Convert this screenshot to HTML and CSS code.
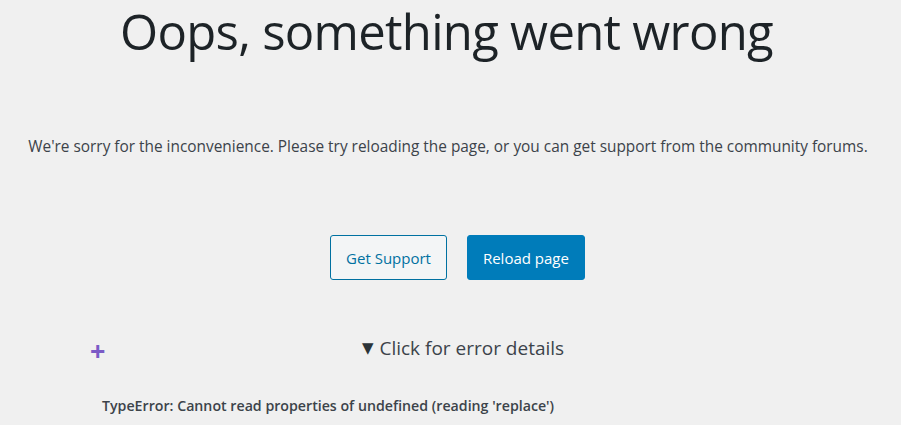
FILE: index.html
```html
<!DOCTYPE html>
<html lang="en">
<head>
    <meta charset="UTF-8" />
    <meta name="viewport" content="width=device-width, initial-scale=1.0"/>
    <title>Error</title>
    <link rel="stylesheet" href="styles.css">
</head>
<body>
    <div class="error-page">
        <h1 class="title">Oops, something went wrong</h1>
        <p class="message">We're sorry for the inconvenience. Please try reloading the page, or you can get support from the community forums.</p>

        <div class="actions">
            <button class="btn btn-secondary">Get Support</button>
            <button class="btn btn-primary">Reload page</button>
        </div>

        <details class="details" open>
            <span class="plus">+</span>
            <summary>Click for error details</summary>
            <div class="error-text">TypeError: Cannot read properties of undefined (reading 'replace')</div>
        </details>
    </div>
</body>
</html>
```

FILE: styles.css
```css
body {
    margin: 0;
    background-color: #f0f0f0;
    color: #3c434a;
    font-family: "Open Sans", "Noto Sans", sans-serif;
    overflow: hidden;
}

.error-page {
    text-align: center;
}

.title {
    margin: 0;
    padding-right: 8px;
    font-size: 49px;
    font-weight: 400;
    letter-spacing: -0.7px;
    line-height: 62px;
    color: #1d2327;
}

.message {
    margin: 74px 0 0;
    padding-right: 5px;
    font-size: 15.4px;
    line-height: 22px;
}

.actions {
    display: flex;
    justify-content: center;
    gap: 20px;
    margin-top: 77px;
    padding-left: 14px;
}

.btn {
    height: 45px;
    padding: 0 15px;
    border-radius: 3px;
    font-family: inherit;
    font-size: 15px;
    cursor: pointer;
}

.btn-secondary {
    background-color: #f3f5f6;
    border: 1px solid #0071a1;
    color: #0071a1;
}

.btn-primary {
    background-color: #007cba;
    border: 1px solid #007cba;
    color: #fff;
}

.details {
    position: relative;
    margin: 55px 77px 0 102px;
    font-size: 19px;
}

.details summary {
    list-style: none;
    cursor: pointer;
}

.details summary::-webkit-details-marker {
    display: none;
}

.details summary::before {
    content: "\25BC";
    margin-right: 6px;
    font-family: "DejaVu Sans", sans-serif;
    font-size: 15px;
    color: #2c3338;
    vertical-align: 2px;
}

.plus {
    position: absolute;
    left: -12px;
    top: 2px;
    font-size: 27px;
    font-weight: 700;
    color: #7b5bc6;
    line-height: 1;
}

.error-text {
    margin-top: 35px;
    text-align: left;
    font-size: 14.2px;
    font-weight: 600;
}
```
